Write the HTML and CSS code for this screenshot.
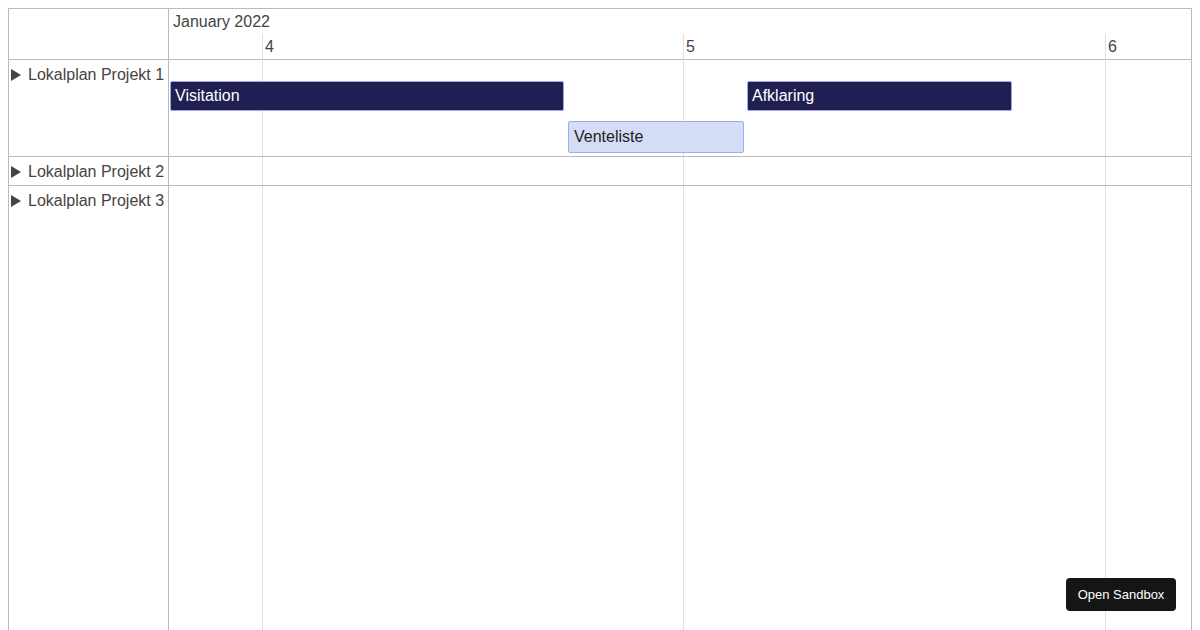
FILE: index.html
```html
<!DOCTYPE html>
<html lang="en">
<head>
  <meta charset="UTF-8">
  <meta name="viewport" content="width=device-width, initial-scale=1.0">
  <title>Timeline</title>
  <link rel="stylesheet" href="styles.css">
</head>
<body>
  <div class="timeline-chart">
    <!-- venstre kolonne: grupper -->
    <div class="sidebar">
      <div class="sidebar-header"></div>
      <div class="group group-tall"><span class="caret"></span>Lokalplan Projekt 1</div>
      <div class="group"><span class="caret"></span>Lokalplan Projekt 2</div>
      <div class="group group-last"><span class="caret"></span>Lokalplan Projekt 3</div>
    </div>
    <!-- tidslinje -->
    <div class="canvas">
      <div class="canvas-header">
        <div class="month">January 2022</div>
        <div class="days">
          <span class="day" style="left: 93px">4</span>
          <span class="day" style="left: 514px">5</span>
          <span class="day" style="left: 936px">6</span>
        </div>
      </div>
      <div class="gridline" style="left: 93px"></div>
      <div class="gridline" style="left: 514px"></div>
      <div class="gridline" style="left: 936px"></div>
      <div class="lane lane-tall">
        <div class="item item-dark" style="left: 1px; top: 21px; width: 394px">Visitation</div>
        <div class="item item-light" style="left: 399px; top: 61px; width: 176px">Venteliste</div>
        <div class="item item-dark" style="left: 578px; top: 21px; width: 265px">Afklaring</div>
      </div>
      <div class="lane"></div>
      <div class="lane lane-last"></div>
    </div>
  </div>
  <button class="sandbox-btn">Open Sandbox</button>
</body>
</html>
```

FILE: styles.css
```css
* {margin: 0; padding: 0; box-sizing: border-box;}
body {
  margin: 8px 8px 0;
  font-family: "Liberation Sans", Arial, sans-serif;
  font-size: 16px;
  color: #444;
  overflow: hidden;
}
.timeline-chart {
  display: flex;
  border: 1px solid #bbb;
  border-bottom: none;
  height: calc(100vh - 8px);
}
.sidebar {
  width: 160px;
  flex: 0 0 160px;
  border-right: 1px solid #bbb;
}
.sidebar-header {
  height: 51px;
  border-bottom: 1px solid #bbb;
}
.group {
  display: flex;
  align-items: flex-start;
  height: 29px;
  padding: 6px 0 0 2px;
  border-bottom: 1px solid #bbb;
  white-space: nowrap;
}
.group-tall {height: 97px;}
.group-last {border-bottom: none;}
.caret {
  width: 0;
  height: 0;
  margin: 3px 7px 0 0;
  border-left: 10px solid #444;
  border-top: 6px solid transparent;
  border-bottom: 6px solid transparent;
}
.canvas {
  flex: 1;
  position: relative;
}
.canvas-header {
  height: 51px;
  border-bottom: 1px solid #bbb;
}
.month {
  height: 25px;
  padding: 4px 0 0 4px;
}
.days {
  position: relative;
  height: 25px;
}
.day {
  position: absolute;
  top: 4px;
  padding-left: 3px;
}
.gridline {
  position: absolute;
  top: 25px;
  bottom: 0;
  width: 1px;
  background-color: #e0e0e0;
}
.lane {
  position: relative;
  height: 29px;
  border-bottom: 1px solid #bbb;
}
.lane-tall {height: 97px;}
.lane-last {border-bottom: none;}
.item {
  position: absolute;
  height: 30px;
  line-height: 28px;
  padding-left: 4px;
  border: 1px solid;
  border-radius: 2px;
  white-space: nowrap;
  overflow: hidden;
}
.item-dark {
  background-color: #1f1f52;
  border-color: #a3a3e6;
  color: #fff;
}
.item-light {
  height: 32px;
  line-height: 30px;
  padding-left: 5px;
  background-color: #d4ddf5;
  border-color: #98aef0;
  color: #222;
}
.sandbox-btn {
  position: fixed;
  right: 24px;
  bottom: 19px;
  width: 110px;
  height: 33px;
  border: none;
  border-radius: 4px;
  background-color: #151515;
  color: #fff;
  font-family: "Liberation Sans", Arial, sans-serif;
  font-size: 13px;
}
```
